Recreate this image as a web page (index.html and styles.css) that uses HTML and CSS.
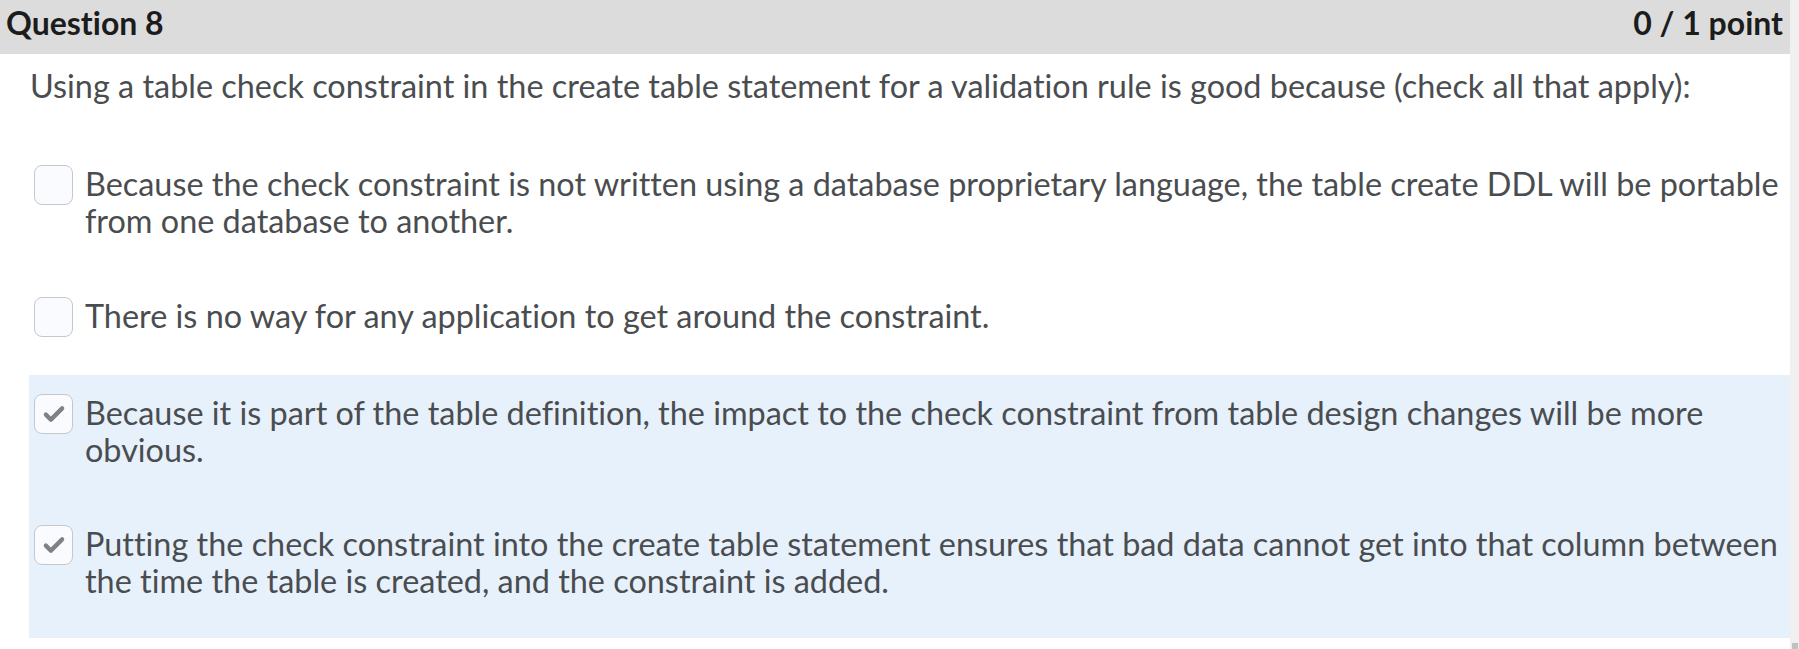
FILE: index.html
```html
<!DOCTYPE html>
<html lang="en">
  <head>
    <meta charset="UTF-8" />
    <meta name="viewport" content="width=device-width, initial-scale=1.0" />
    <title>Question 8</title>
    <link rel="stylesheet" href="styles.css">
  </head>
  <body>
    <div class="page">
      <div class="quiz">
        <div class="question-header">
          <span class="question-title">Question 8</span>
          <span class="question-score">0 / 1 point</span>
        </div>
        <div class="question-text">
          Using a table check constraint in the create table statement for a validation rule is good because (check all that apply):
        </div>
        <div class="options">
          <div class="option">
            <span class="checkbox"></span>
            <span class="option-text">Because the check constraint is not written using a database proprietary language, the table create DDL will be portable from one database to another.</span>
          </div>
          <div class="option">
            <span class="checkbox"></span>
            <span class="option-text">There is no way for any application to get around the constraint.</span>
          </div>
          <div class="option selected">
            <span class="checkbox">
              <svg viewBox="0 0 24 24" width="30" height="30"><path d="M5.5 12.5l4 4L18.5 7.5" /></svg>
            </span>
            <span class="option-text">Because it is part of the table definition, the impact to the check constraint from table design changes will be more obvious.</span>
          </div>
          <div class="option selected">
            <span class="checkbox">
              <svg viewBox="0 0 24 24" width="30" height="30"><path d="M5.5 12.5l4 4L18.5 7.5" /></svg>
            </span>
            <span class="option-text">Putting the check constraint into the create table statement ensures that bad data cannot get into that column between the time the table is created, and the constraint is added.</span>
          </div>
        </div>
      </div>
      <div class="scrollbar">
        <div class="scroll-thumb"></div>
      </div>
    </div>
  </body>
</html>
```

FILE: styles.css
```css
body {
  margin: 0;
  font-family: Lato, "Open Sans", sans-serif;
  font-variant-ligatures: none;
  background-color: #fff;
  color: #4a4d50;
}

.page {
  display: flex;
  height: 649px;
  overflow: hidden;
}

.quiz {
  flex: 1;
}

.question-header {
  display: flex;
  justify-content: space-between;
  align-items: flex-start;
  height: 54px;
  box-sizing: border-box;
  padding: 3px 7px 0 6px;
  background-color: #dcdcdc;
  color: #1c1c1c;
  font-size: 32px;
  font-weight: bold;
}

.question-text {
  padding: 13px 0 0 30px;
  font-size: 32.4px;
  line-height: 37px;
}

.options {
  margin-top: 42px;
  margin-left: 29px;
}

.option {
  display: flex;
  align-items: flex-start;
  gap: 12px;
  padding: 19px 10px 38px 5px;
  font-size: 32.4px;
  line-height: 37.3px;
}

.option.selected {
  background-color: #e7f1fc;
}

.checkbox {
  flex: none;
  display: flex;
  align-items: center;
  justify-content: center;
  width: 37px;
  height: 38px;
  border: 1px solid #c5c8cb;
  border-radius: 8px;
  background-color: #f9fbff;
}

.checkbox svg path {
  fill: none;
  stroke: #7d8287;
  stroke-width: 3.4;
  stroke-linecap: round;
  stroke-linejoin: round;
}

.scrollbar {
  width: 9px;
  background-color: #f0f0f0;
  display: flex;
  flex-direction: column;
  justify-content: flex-end;
}

.scroll-thumb {
  height: 6px;
  margin: 0 1px 0 2px;
  background-color: #c1c1c1;
}
```
